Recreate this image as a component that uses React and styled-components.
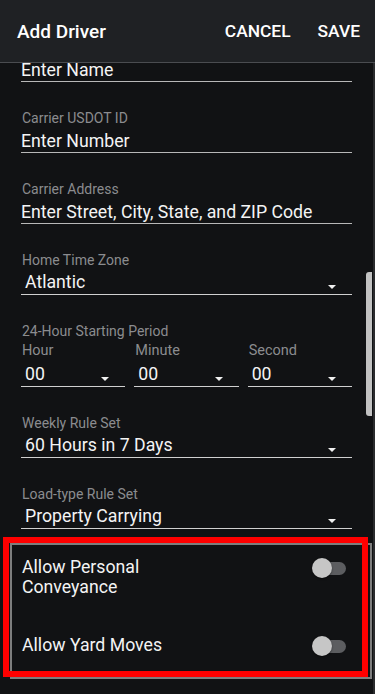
import React from 'react';
import styled, { createGlobalStyle } from 'styled-components';

const GlobalStyle = createGlobalStyle`
  html, body {
    margin: 0;
    padding: 0;
    background: #111214;
  }
  body {
    font-family: Roboto, "Noto Sans", "Liberation Sans", sans-serif;
    -webkit-font-smoothing: antialiased;
  }
`;

// Screen shell
const Screen = styled.div`
  width: 375px;
  height: 694px;
  background: #111214;
  display: flex;
  flex-direction: column;
  overflow: hidden;
  position: relative;
`;

// Top app bar
const AppBar = styled.header`
  height: 63px;
  flex: 0 0 63px;
  background: #1f2124;
  border-bottom: 1px solid #4a4c50;
  display: flex;
  align-items: center;
  padding: 0 15px 0 17px;
  box-sizing: border-box;
  position: relative;
  z-index: 2;
`;

const Title = styled.h1`
  margin: 0;
  flex: 1;
  font-size: 19px;
  font-weight: 500;
  color: #ffffff;
`;

const BarAction = styled.button`
  background: none;
  border: 0;
  padding: 0;
  margin-left: ${({ $gap }) => $gap || 0}px;
  font-family: inherit;
  font-size: 17.4px;
  font-weight: 500;
  color: #ffffff;
`;

// Scrolling form area
const Body = styled.main`
  flex: 1;
  position: relative;
  overflow: hidden;
`;

const Form = styled.div`
  margin-top: -4px;
  padding: 0 23px 0 21px;
  display: flex;
  flex-direction: column;
`;

const Field = styled.div`
  margin-bottom: 28px;
`;

const Label = styled.div`
  font-size: 14px;
  line-height: 16px;
  color: #8b8c8f;
  padding-left: 1px;
  margin-bottom: ${({ $mb }) => ($mb === undefined ? 4 : $mb)}px;
`;

const SubLabel = styled.div`
  font-size: 14.5px;
  line-height: 16px;
  color: #8b8c8f;
  padding-left: 1px;
  margin-bottom: 3px;
`;

const Input = styled.div`
  font-size: 17.7px;
  line-height: 22px;
  color: #f4f4f4;
  border-bottom: 1px solid #b8b8b8;
  white-space: nowrap;
`;

const Select = styled.div`
  display: flex;
  align-items: center;
  height: 24px;
  padding-left: 4px;
  padding-right: 16px;
  font-size: 17.7px;
  color: #f4f4f4;
  border-bottom: 1px solid #d0d0d0;
  white-space: nowrap;
`;

const SelectText = styled.span`
  flex: 1;
  line-height: 22px;
`;

const Caret = styled.span`
  width: 0;
  height: 0;
  margin-top: 10px;
  border-left: 4.5px solid transparent;
  border-right: 4.5px solid transparent;
  border-top: 4.5px solid #f0f0f0;
`;

const TimeRow = styled.div`
  display: grid;
  grid-template-columns: repeat(3, 1fr);
  column-gap: 9px;
`;

// Highlighted toggles panel (grey frame with a red annotation frame over it)
const Highlight = styled.section`
  position: relative;
  margin: -14px -20px 0 -11px;
  border: 2px solid #7e7e7e;
  padding: 12px 24px 0 10px;
  height: 136px;
  box-sizing: border-box;
`;

const RedFrame = styled.div`
  position: absolute;
  left: -9px;
  top: -8px;
  right: 2px;
  bottom: 0;
  border: 6px solid #ff0000;
  pointer-events: none;
`;

const ToggleRow = styled.div`
  display: flex;
  align-items: flex-start;
  justify-content: space-between;
  min-height: ${({ $h }) => $h}px;
`;

const ToggleLabel = styled.div`
  font-size: 17.7px;
  line-height: 20px;
  color: #f4f4f4;
  width: 150px;
`;

const Switch = styled.div`
  position: relative;
  width: 34px;
  height: 20px;
  margin-top: 1px;
  display: flex;
  align-items: center;
`;

const Track = styled.div`
  margin-left: 10px;
  width: 24px;
  height: 13px;
  border-radius: 7px;
  background: #5c5d60;
`;

const Thumb = styled.div`
  position: absolute;
  left: 0;
  top: 0;
  width: 20px;
  height: 20px;
  border-radius: 50%;
  background: #c6c6c6;
  box-shadow: 0 1px 2px rgba(0, 0, 0, 0.5);
`;

const ScrollThumb = styled.div`
  position: absolute;
  right: 3px;
  top: 209px;
  width: 6px;
  height: 144px;
  border-radius: 3px 0 0 3px;
  background: #c2c2c2;
`;

const EdgeStrip = styled.div`
  position: absolute;
  right: 0;
  top: 0;
  bottom: 0;
  width: 2px;
  background: #2a2b2d;
`;

const TextField = ({ label, value }) => (
  <Field>
    {label && <Label>{label}</Label>}
    <Input>{value}</Input>
  </Field>
);

const SelectField = ({ value }) => (
  <Select>
    <SelectText>{value}</SelectText>
    <Caret />
  </Select>
);

const Toggle = () => (
  <Switch>
    <Track />
    <Thumb />
  </Switch>
);

export default function App() {
  return (
    <>
      <GlobalStyle />
      <Screen>
        <AppBar>
          <Title>Add Driver</Title>
          <BarAction>CANCEL</BarAction>
          <BarAction $gap={27}>SAVE</BarAction>
        </AppBar>
        <Body>
          <Form>
            <TextField value="Enter Name" />
            <TextField label="Carrier USDOT ID" value="Enter Number" />
            <TextField label="Carrier Address" value="Enter Street, City, State, and ZIP Code" />
            <Field>
              <Label $mb={2}>Home Time Zone</Label>
              <SelectField value="Atlantic" />
            </Field>
            <Field>
              <Label $mb={4}>24-Hour Starting Period</Label>
              <TimeRow>
                {['Hour', 'Minute', 'Second'].map((t) => (
                  <div key={t}>
                    <SubLabel>{t}</SubLabel>
                    <SelectField value="00" />
                  </div>
                ))}
              </TimeRow>
            </Field>
            <Field>
              <Label $mb={2}>Weekly Rule Set</Label>
              <SelectField value="60 Hours in 7 Days" />
            </Field>
            <Field>
              <Label $mb={2}>Load-type Rule Set</Label>
              <SelectField value="Property Carrying" />
            </Field>
            <Highlight>
              <RedFrame />
              <ToggleRow $h={78}>
                <ToggleLabel>Allow Personal Conveyance</ToggleLabel>
                <Toggle />
              </ToggleRow>
              <ToggleRow $h={20}>
                <ToggleLabel>Allow Yard Moves</ToggleLabel>
                <Toggle />
              </ToggleRow>
            </Highlight>
          </Form>
          <ScrollThumb />
          <EdgeStrip />
        </Body>
      </Screen>
    </>
  );
}
